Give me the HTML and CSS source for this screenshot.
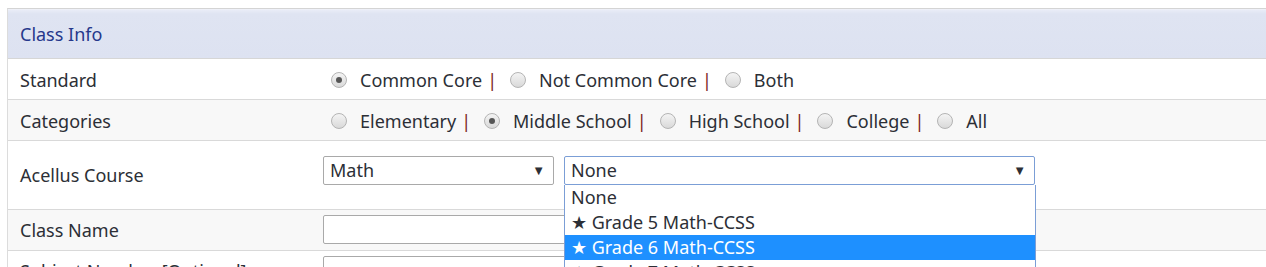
FILE: index.html
```html
<!DOCTYPE html>
<html lang="en">
<head>
  <meta charset="UTF-8" />
  <title>Class Info</title>
  <link rel="stylesheet" href="styles.css">
</head>
<body>
  <div class="panel">
    <div class="panel-head">Class Info</div>

    <div class="row">
      <div class="label">Standard</div>
      <div class="field">
        <label class="opt"><input type="radio" name="std" checked>Common Core</label>
        <span class="sep">|</span>
        <label class="opt"><input type="radio" name="std">Not Common Core</label>
        <span class="sep">|</span>
        <label class="opt"><input type="radio" name="std">Both</label>
      </div>
    </div>

    <div class="row alt">
      <div class="label">Categories</div>
      <div class="field">
        <label class="opt"><input type="radio" name="cat">Elementary</label>
        <span class="sep">|</span>
        <label class="opt"><input type="radio" name="cat" checked>Middle School</label>
        <span class="sep">|</span>
        <label class="opt"><input type="radio" name="cat">High School</label>
        <span class="sep">|</span>
        <label class="opt"><input type="radio" name="cat">College</label>
        <span class="sep">|</span>
        <label class="opt"><input type="radio" name="cat">All</label>
      </div>
    </div>

    <div class="row course">
      <div class="label">Acellus Course</div>
      <div class="field">
        <div class="select subject">Math<span class="arrow">&#9660;</span></div>
        <div class="course-pick">
          <div class="select open">None<span class="arrow">&#9660;</span></div>
          <ul class="dropdown">
            <li>None</li>
            <li>&#9733; Grade 5 Math-CCSS</li>
            <li class="hl">&#9733; Grade 6 Math-CCSS</li>
            <li>&#9733; Grade 7 Math-CCSS</li>
          </ul>
        </div>
      </div>
    </div>

    <div class="row alt">
      <div class="label">Class Name</div>
      <div class="field"><input class="text" type="text"></div>
    </div>

    <div class="row">
      <div class="label">Subject Number [Optional]</div>
      <div class="field"><input class="text" type="text"></div>
    </div>
  </div>
</body>
</html>
```

FILE: styles.css
```css
body {
  margin: 0;
  padding: 8px 0 0 7px;
  font-family: "Noto Sans", "Open Sans", sans-serif;
  font-size: 18px;
  color: #2c2f36;
  background: #fff;
  overflow: hidden;
}

.panel {
  width: 1280px;
  border-top: 1px solid #d4d4d4;
  border-left: 1px solid #dcdcdc;
}

.panel-head {
  height: 48px;
  line-height: 48px;
  padding-left: 12px;
  color: #26388c;
  background: linear-gradient(#e9ecf7 0, #dfe4f2 4px, #dde2f1 100%);
  border-top: 1px solid #eef0f8;
  border-bottom: 1px solid #d6d6d6;
}

.row {
  display: grid;
  grid-template-columns: 315px 1fr;
  box-sizing: border-box;
  min-height: 41px;
  padding-top: 2px;
  border-bottom: 1px solid #d9d9d9;
  background: #fff;
}

.row.alt {
  background: #f8f8f8;
}

.label {
  display: flex;
  align-items: center;
  padding-left: 12px;
  white-space: nowrap;
}

.field {
  display: flex;
  align-items: center;
}

.opt {
  display: flex;
  align-items: center;
  gap: 13px;
  padding-left: 8px;
  white-space: nowrap;
}

.opt input {
  appearance: none;
  width: 16px;
  height: 16px;
  margin: 0;
  border-radius: 50%;
  border: 1px solid #b4b4b4;
  background: linear-gradient(#f4f4f4, #d9d9d9);
  position: relative;
}

.opt input:checked::after {
  content: "";
  position: absolute;
  left: 4px;
  top: 4px;
  width: 6px;
  height: 6px;
  border-radius: 50%;
  background: #555;
}

.sep {
  color: #7b1d1d;
  margin: 0 5px 0 5px;
}

.course {
  min-height: 69px;
  padding-top: 0;
}

.course .field {
  align-items: flex-start;
  padding-top: 15px;
  gap: 10px;
}

.select {
  position: relative;
  box-sizing: border-box;
  height: 29px;
  line-height: 27px;
  padding-left: 6px;
  border: 1px solid #a9a9a9;
  border-radius: 2px;
  background: #fff;
}

.select .arrow {
  position: absolute;
  right: 8px;
  top: 0;
  font-size: 13px;
}

.subject {
  width: 231px;
}

.course-pick {
  position: relative;
  width: 471px;
}

.select.open {
  border-color: #7b9ed6;
}

.dropdown {
  position: absolute;
  left: 0;
  top: 29px;
  width: 470px;
  margin: 0;
  padding: 0;
  list-style: none;
  background: #fff;
  border: 1px solid #7b9ed6;
  border-top: none;
  z-index: 2;
}

.dropdown li {
  height: 25px;
  line-height: 24px;
  padding-left: 6px;
}

.dropdown li.hl {
  background: #1e90ff;
  color: #fff;
}

.row:has(.text) {
  padding-top: 0;
}

.text {
  box-sizing: border-box;
  width: 480px;
  height: 29px;
  margin: 5px 0 0 0;
  align-self: flex-start;
  border: 1px solid #a9a9a9;
  border-radius: 2px;
}
```
